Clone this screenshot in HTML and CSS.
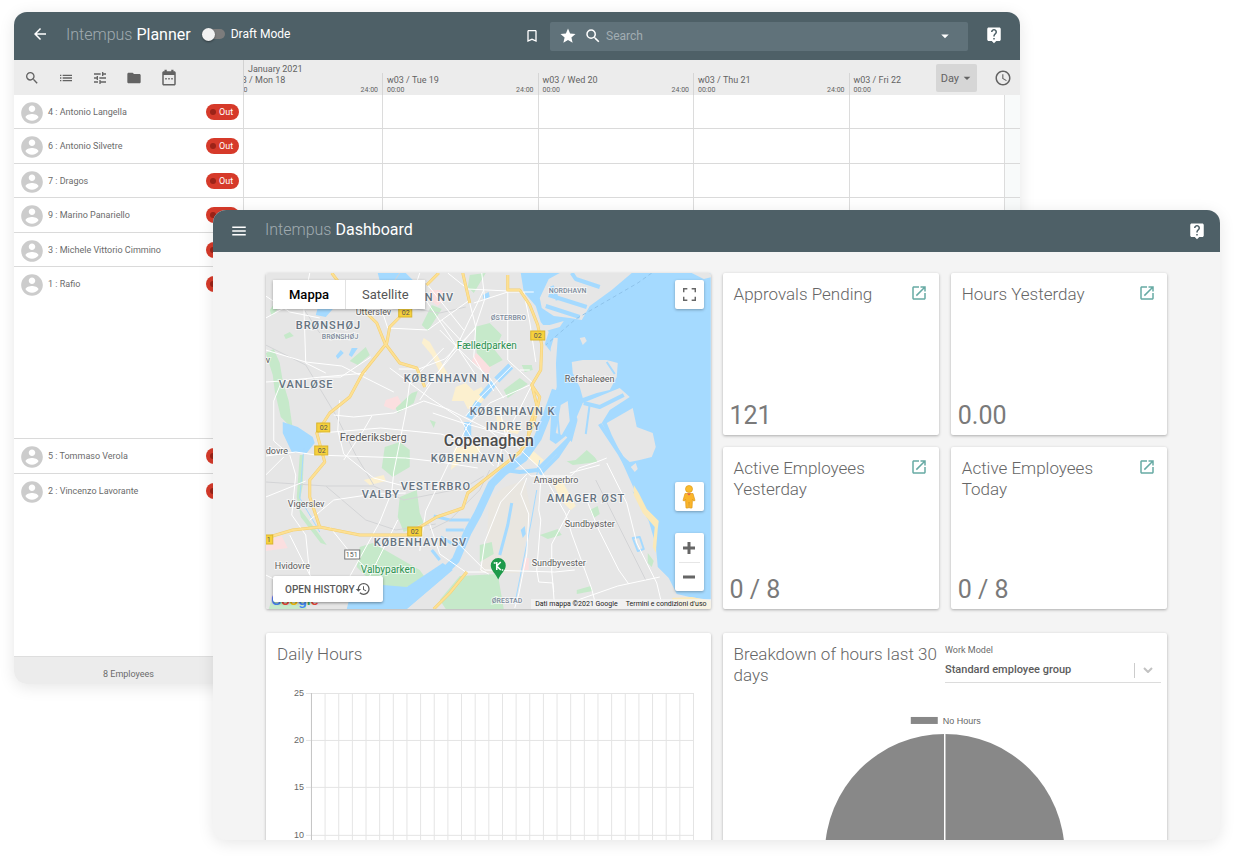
FILE: index.html
```html
<!DOCTYPE html>
<html lang="en">
<head>
<meta charset="utf-8">
<title>Intempus</title>
<link rel="stylesheet" href="styles.css">
</head>
<body>
<svg class="sprite" aria-hidden="true">
  <symbol id="i-back" viewBox="0 0 24 24"><path d="M20 11H7.83l5.59-5.59L12 4l-8 8 8 8 1.41-1.41L7.83 13H20v-2z"/></symbol>
  <symbol id="i-search" viewBox="0 0 24 24"><path d="M15.5 14h-.79l-.28-.27A6.471 6.471 0 0 0 16 9.5 6.5 6.5 0 1 0 9.5 16c1.61 0 3.09-.59 4.23-1.57l.27.28v.79l5 4.99L20.49 19l-4.99-5zm-6 0C7.01 14 5 11.99 5 9.5S7.01 5 9.5 5 14 7.01 14 9.5 11.99 14 9.5 14z"/></symbol>
  <symbol id="i-list" viewBox="0 0 24 24"><path d="M3 13h2v-2H3v2zm0 4h2v-2H3v2zm0-8h2V7H3v2zm4 4h14v-2H7v2zm0 4h14v-2H7v2zM7 7v2h14V7H7z"/></symbol>
  <symbol id="i-tune" viewBox="0 0 24 24"><path d="M3 17v2h6v-2H3zM3 5v2h10V5H3zm10 16v-2h8v-2h-8v-2h-2v6h2zM7 9v2H3v2h4v2h2V9H7zm14 4v-2H11v2h10zm-6-4h2V7h4V5h-4V3h-2v6z"/></symbol>
  <symbol id="i-folder" viewBox="0 0 24 24"><path d="M10 4H4c-1.1 0-1.99.9-1.99 2L2 18c0 1.1.9 2 2 2h16c1.1 0 2-.9 2-2V8c0-1.1-.9-2-2-2h-8l-2-2z"/></symbol>
  <symbol id="i-date" viewBox="0 0 24 24"><path d="M19 3h-1V1h-3v2H9V1H6v2H5c-1.110 0-2 .9-2 2v15c0 1.100.89 2 2 2h14c1.100 0 2-.9 2-2V5c0-1.100-.9-2-2-2zm0 17H5V8h14v12zM7 12h2v2H7zm4 0h2v2h-2zm4 0h2v2h-2z"/></symbol>
  <symbol id="i-user" viewBox="0 0 24 24"><path d="M12 2C6.48 2 2 6.48 2 12s4.48 10 10 10 10-4.48 10-10S17.52 2 12 2zm0 3c1.66 0 3 1.34 3 3s-1.34 3-3 3-3-1.34-3-3 1.34-3 3-3zm0 14.2c-2.5 0-4.71-1.28-6-3.22.03-1.99 4-3.08 6-3.08 1.99 0 5.97 1.09 6 3.08-1.29 1.94-3.5 3.22-6 3.22z"/></symbol>
  <symbol id="i-bookmark" viewBox="0 0 24 24"><path d="M17 3H7c-1.1 0-1.99.9-1.99 2L5 21l7-3 7 3V5c0-1.1-.9-2-2-2zm0 15l-5-2.18L7 18V5h10v13z"/></symbol>
  <symbol id="i-star" viewBox="0 0 24 24"><path d="M12 17.27L18.18 21l-1.64-7.03L22 9.24l-7.19-.61L12 2 9.19 8.63 2 9.24l5.46 4.73L5.82 21z"/></symbol>
  <symbol id="i-help" viewBox="0 0 24 24"><path d="M19 2H5c-1.11 0-2 .9-2 2v14c0 1.1.89 2 2 2h4l3 3 3-3h4c1.1 0 2-.9 2-2V4c0-1.1-.9-2-2-2zm-6 16h-2v-2h2v2zm2.07-7.75l-.9.92C13.45 11.9 13 12.5 13 14h-2v-.5c0-1.1.45-2.1 1.17-2.83l1.24-1.26c.37-.36.59-.86.59-1.41 0-1.1-.9-2-2-2s-2 .9-2 2H8c0-2.21 1.79-4 4-4s4 1.79 4 4c0 .88-.36 1.68-.93 2.25z"/></symbol>
  <symbol id="i-clock" viewBox="0 0 24 24"><path d="M11.99 2C6.47 2 2 6.48 2 12s4.47 10 9.99 10C17.52 22 22 17.52 22 12S17.52 2 11.99 2zM12 20c-4.42 0-8-3.58-8-8s3.58-8 8-8 8 3.58 8 8-3.58 8-8 8zm.5-13H11v6l5.25 3.15.75-1.23-4.5-2.67z"/></symbol>
  <symbol id="i-open" viewBox="0 0 24 24"><path d="M19 19H5V5h7V3H5c-1.11 0-2 .9-2 2v14c0 1.1.89 2 2 2h14c1.1 0 2-.9 2-2v-7h-2v7zM14 3v2h3.59l-9.83 9.83 1.41 1.41L19 6.41V10h2V3h-7z"/></symbol>
  <symbol id="i-history" viewBox="0 0 24 24"><path d="M13 3a9 9 0 0 0-9 9H1l3.89 3.89.07.14L9 12H6c0-3.87 3.13-7 7-7s7 3.13 7 7-3.13 7-7 7c-1.93 0-3.68-.79-4.94-2.06l-1.42 1.42A8.954 8.954 0 0 0 13 21a9 9 0 0 0 0-18zm-1 5v5l4.28 2.54.72-1.21-3.5-2.08V8H12z"/></symbol>
  <symbol id="i-menu" viewBox="0 0 24 24"><path d="M3 18h18v-2H3v2zm0-5h18v-2H3v2zm0-7v2h18V6H3z"/></symbol>
  <symbol id="i-drop" viewBox="0 0 24 24"><path d="M7 10l5 5 5-5z"/></symbol>
  <symbol id="i-full" viewBox="0 0 18 18"><path d="M0 0h6v2H2v4H0zM12 0h6v6h-2V2h-4zM0 12h2v4h4v2H0zM16 12h2v6h-6v-2h4z"/></symbol>
</svg>

<div class="stage">
  <section class="window planner" aria-label="Intempus Planner">
    <header class="bar planner-bar">
      <button class="icon-btn back" aria-label="Back"><svg class="icon icon-18"><use href="#i-back"/></svg></button>
      <h1 class="planner-title"><span class="brand">Intempus</span> Planner</h1>
      <label class="draft"><input class="switch" type="checkbox" role="switch">Draft Mode</label>
      <button class="icon-btn bookmark" aria-label="Bookmark"><svg class="icon icon-16"><use href="#i-bookmark"/></svg></button>
      <div class="search">
        <svg class="icon icon-18"><use href="#i-star"/></svg>
        <svg class="icon icon-18"><use href="#i-search"/></svg>
        <input class="search-input" type="text" placeholder="Search" aria-label="Search">
        <button class="icon-btn" aria-label="Search options"><svg class="icon icon-18"><use href="#i-drop"/></svg></button>
      </div>
      <button class="icon-btn help" aria-label="Help"><svg class="icon icon-18"><use href="#i-help"/></svg></button>
    </header>

    <div class="toolbar">
      <div class="tools">
        <button class="icon-btn" aria-label="Search"><svg class="icon icon-16"><use href="#i-search"/></svg></button>
        <button class="icon-btn" aria-label="List"><svg class="icon icon-16"><use href="#i-list"/></svg></button>
        <button class="icon-btn" aria-label="Filters"><svg class="icon icon-16"><use href="#i-tune"/></svg></button>
        <button class="icon-btn" aria-label="Folders"><svg class="icon icon-16"><use href="#i-folder"/></svg></button>
        <button class="icon-btn" aria-label="Calendar"><svg class="icon icon-18"><use href="#i-date"/></svg></button>
      </div>
      <div class="timeline">
        <div class="month">January 2021</div>
        <div class="days">
          <div class="day day-first"><span class="day-name">w03 / Mon 18</span><span class="hours"><span>00:00</span><span>24:00</span></span></div>
          <div class="day"><span class="day-name">w03 / Tue 19</span><span class="hours"><span>00:00</span><span>24:00</span></span></div>
          <div class="day"><span class="day-name">w03 / Wed 20</span><span class="hours"><span>00:00</span><span>24:00</span></span></div>
          <div class="day"><span class="day-name">w03 / Thu 21</span><span class="hours"><span>00:00</span><span>24:00</span></span></div>
          <div class="day"><span class="day-name">w03 / Fri 22</span><span class="hours"><span>00:00</span></span></div>
        </div>
        <div class="scale">
          <button class="scale-btn">Day <svg class="icon icon-16"><use href="#i-drop"/></svg></button>
          <button class="icon-btn" aria-label="Now"><svg class="icon icon-18"><use href="#i-clock"/></svg></button>
        </div>
      </div>
    </div>

    <div class="plan">
      <div class="columns" aria-hidden="true"><i></i><i></i><i></i><i></i><i></i><i></i><i class="next"></i></div>
      <ul class="employees">
        <li><svg class="avatar"><use href="#i-user"/></svg><span class="name">4 : Antonio Langella</span><span class="chip">Out</span></li>
        <li><svg class="avatar"><use href="#i-user"/></svg><span class="name">6 : Antonio Silvetre</span><span class="chip">Out</span></li>
        <li><svg class="avatar"><use href="#i-user"/></svg><span class="name">7 : Dragos</span><span class="chip">Out</span></li>
        <li><svg class="avatar"><use href="#i-user"/></svg><span class="name">9 : Marino Panariello</span><span class="chip">Out</span></li>
        <li><svg class="avatar"><use href="#i-user"/></svg><span class="name">3 : Michele Vittorio Cimmino</span><span class="chip">Out</span></li>
        <li><svg class="avatar"><use href="#i-user"/></svg><span class="name">1 : Rafio</span><span class="chip">Out</span></li>
        <li><svg class="avatar"><use href="#i-user"/></svg><span class="name">5 : Tommaso Verola</span><span class="chip">Out</span></li>
        <li><svg class="avatar"><use href="#i-user"/></svg><span class="name">2 : Vincenzo Lavorante</span><span class="chip">Out</span></li>
      </ul>
    </div>
    <footer class="count"><span>8 Employees</span></footer>
  </section>

  <section class="window dashboard" aria-label="Intempus Dashboard">
    <header class="bar dash-bar">
      <button class="icon-btn" aria-label="Menu"><svg class="icon icon-18"><use href="#i-menu"/></svg></button>
      <h1 class="dash-title"><span class="brand">Intempus</span> Dashboard</h1>
      <button class="icon-btn dash-help" aria-label="Help"><svg class="icon icon-18"><use href="#i-help"/></svg></button>
    </header>

    <main class="board">
      <div class="card map">
        <svg class="map-art" viewBox="266 273 445 336" preserveAspectRatio="xMidYMid slice" role="img" aria-label="Map of Copenhagen">
          <rect class="land" x="266" y="273" width="445" height="336"/>
          <!-- districts and built-up tints -->
          <path fill="#e9e6e0" d="M489 500l14-12 22-8 6 30-6 34-6 29h-40l8-30z"/>
          <path fill="#fcf0cf" d="M456 387l10-4 8 8 8-4 4 10-8 10-10 2-4-8-12 0zM455 448l16-2 12-4-4 10-18 10-10 8zM364 480l20-5 2 6-16 4zM496 412l14 16 12-2-4 8-20-4zM552 480l10 0 14 26-5 4-10-10zM530 448l14 12-6 6-12-10zM424 338l6 4 8 14 10 18-6 3-10-22-10-12z"/>
          <path fill="#fbdfe0" d="M430 290h12l4 8-8 8-8-6zM476 353l16 12-4 10-16-14zM386 400l12-4 4 8-8 6-10-4zM266 540l16-4 6 12-22 3zM524 558h5v12h-6z"/>
          <!-- parks -->
          <g class="park">
            <path d="M475 327l15-4 12 12-7 15 8 10-13 7-13-14z"/>
            <path d="M504 390l16-12 8 6-20 14z"/>
            <path d="M385 447l15-5 10 8v17l-17 10-11-9z"/>
            <path d="M400 497l17-7 3 23 4 10-20 9-6-15z"/>
            <path d="M360 547l13-4 47 27 7 10-20 7h-30l-20-20z"/>
            <path d="M440 600l20-24 38-2 6 35h-58z"/>
            <path d="M565 460l22-17 11 19-25 3z"/>
            <path d="M266 353l8-4 6 14 3 18 6 20 4 28-12-12-6-26-2-16z"/>
            <path d="M275 590l20-10 12 29h-38z"/>
            <path d="M432 305l10 4-14 22-6-6zM350 361l16-14 4 8-12 10zM284 335l6-3 4 4-8 3zM270 310l10-14 4 6-12 14zM412 393l6-2-4 12-16 10-2-5z"/>
            <path d="M540 535l18-6 4 6-14 4zM590 510l8-4 2 8-6 4zM577 590l14-4 2 5-16 3zM480 545l12-3 2 12-14 8zM430 420l6 2-2 6zM470 275l16-2-12 20-6-6zM522 365l10 0 1 5-8 2zM648 553l6 8-2 6-4-4z"/>
            <path d="M300 455l4 0-1 30-4 22 18 24 10 14-6-2-20-26-4-20z"/>
          </g>
          <!-- sea, harbour and lakes -->
          <g class="water">
            <path d="M521 273H711V609L711 600 690 597 677 594 669 578 658 567 656 545 649 521 636 498 628 480 621 463 608 445 597 430 586 440 576 446 566 436 556 444 550 440 552 405 557 387 556 358 545 344 549 332 541 322 536 306 524 292Z"/>
            <path d="M378 273h28l8 8h-34zM318 308l16 0-8 9-10-2zM283 422l15 5 15 10 2 6-8 10-15-1-9-19zM350 597l33-12 24 2 36-24 10 7-20 17-26 22h-60z"/>
            <path d="M336 356l5-6 3 3-6 6zM483 295l6-3 1 5-6 3zM521 530l4-4 1 8-3 4zM352 348l6 0-6 9-3-2z"/>
          </g>
          <g class="river">
            <path stroke-width="8" d="M556 390l-10 28-8 20-14 20-20 14-12 12-14 30-10 18-12 28-12 12-42 36"/>
            <path stroke-width="7" d="M511 366l-14 14M494 383l-12 14M479 402l-10 16M468 422l0 16"/>
            <path stroke-width="4" d="M504 470l16 2 18-2 18-18 14-14 8-16M580 412l-6 20-16 24-18 18"/>
            <path stroke-width="3" d="M470 520l-20 0-16-4M464 530l-18 0M455 545l-14-8M440 560l-8-10M500 555l8-30 4-22"/>
            <path stroke-width="1" d="M537 490l-6 34-8 40-8 40M304 448l-4 50 20 34M536 480l4-20"/>
            <path fill="none" stroke-width="2" d="M633 538l7-1 4 12-6 2z"/>
          </g>
          <!-- islands and quays -->
          <g class="land">
            <path d="M549 279l11-6h72l-20 17-22 16-8 14-12-2-16-2-12-8-2-10z"/>
            <path d="M536 325l14 0 14-4-4 6-14 4zM554 338l4 0-2 28-6-2 1-16zM536 376l8-6 7 3 2 10-8 8-8-3z"/>
            <path d="M572 362l11-2 24 0 11 3-1 14-7 13-13 3-14 5-3-11-7-14z"/>
            <path d="M620 388l10 9-20 13-8 13 15 27 20 45-50-45-10-33 6-14z"/>
            <path d="M607 423l26-15 4 19 16 6 3 14-4 10-12 3-10 2-8-7-10-20z"/>
            <path d="M561 405l7-4 2 20-8 14-6-2zM580 412l6 22 10 8-20 18-14 2 10-20zM631 467l5-4 2 6-3 3zM692 273h20v4l-8 2zM580 338l5-1 2 4-4 4z"/>
          </g>
          <g class="river">
            <path stroke-width="4" d="M549 295l38 12M546 306l34 11M552 286l6 14M572 273l4 6 24 8M584 403l16 4 24-12M600 424l20 30 8 14"/>
            <path stroke-width="2" d="M590 404l-4 30M607 362l8 12M556 400l4 38"/>
            <path stroke="#8fc3ea" stroke-dasharray="4 3" stroke-width="1" d="M652 273l-14 10-62 36-30 26"/>
          </g>
          <path fill="#fbe9b8" d="M634 485l5 8 8 16 12 12-1 8-2 24-3-6 2-20-12-14-9-18zM672 598l20-1 19 4v8h-30z"/>
          <!-- railways -->
          <path class="rail" d="M266 482l60 4 48 0 30 14 60-12 20-12M326 486l40 34 30 10 40-6M430 530l20-10 30-30 10-20M266 345l40 20 30 50 20 40 18 30M400 273l-20 30 60 10 26-6M596 480l20 40 30 60M300 303l20 30"/>
          <!-- local roads -->
          <g class="road">
            <path d="M266 296l24 16 30 6M266 318l44-24 26-10M266 350l40 12 36 4 32 16 20 10M310 273l-6 30 2 60 20 10M340 284l40 20 8 24 40 2 42-30M266 382l16-1 40-4 44-4M282 381l-8 20 0 40 14 12M266 456l30-4 20 3 90 3 34 4 38 6M266 475l18-18M266 497l40-16"/>
            <path d="M290 455l6 20-4 40 14 20 4 40 20 20M310 520l24-20 40-6 32-1M330 527l20 25 20 20M348 580l32-58 12-30 2-20 12-60 4-30 34-34M334 415l20 2 40-4 30-12 24 8 40 20 10 8M340 400l-2 30 6 24 30 24 30 8M321 433l60-5 60 6 40 12M371 357l-30 20-20 0"/>
            <path d="M390 368l40 30 30 20 20 34 14 14M399 369l20 0 26-10 30-30 10-30-3-26M426 387l50-60M470 303l6 24-2 30 20 34M474 303l34-11 26 0M440 330l30 30 20 18 14 20M508 290l0 70 24 22M512 366l-30 30-16 20M530 385l-40 18-22 22-16 32-26 54-6 40"/>
            <path d="M420 400l40-60 24-50M433 413l30 10 60 16M532 385l-10 20-18 34-6 28M524 292l6 30 6 40M442 320l28 30M424 280l40 50M448 273l20 16 40 2M500 410l6 26 34 32 26 46 6 20 20 55 5 20"/>
            <path d="M505 450l20 20 6 6 40 0 8-8 18-6 10-4M607 463l20 40 10 40 20 40 6 25M527 474l-26 28-12 30-4 10-4 28 8 4M527 478l-6 16 8 20-2 40-8 40-4 14M541 480l-2 30 2 10-4 50 2 12 14 1 2 26M570 510l-18 34 0 28 2 20M455 540l30 30 70 2 20-2M578 600l40-14 42-9M587 500l12 30 20 40 10 14M430 524l10 30 26 18 20 0M398 520l-30 60"/>
            <path d="M266 575l20 10 20 0M310 575l-20-40M344 460l20-30 8-14M600 465l-30 8M420 273l-4 12 60 90M520 370l10 0"/>
          </g>
          <!-- main roads -->
          <g class="highway-edge">
            <path d="M332 273l18 24 27 26 8 20 15 20 17 5 8 19M400 317l-10 10-3 16-24 30-13 24-20 16-13 20 8 29-15 18v17l10 30M266 538l27-8 27-3 40 8h47l30-18 26-9 5-15 32-25 20-16 8-12 2-15 7-20-5-20 9-15 1-25-4-20-8-20-10-15h-12v-15M532 385l8 12-6 26-10 24M467 572l-17 21-16 16M463 273l7 30M427 285l12-12"/>
          </g>
          <g class="highway">
            <path d="M332 273l18 24 27 26 8 20 15 20 17 5 8 19M400 317l-10 10-3 16-24 30-13 24-20 16-13 20 8 29-15 18v17l10 30M266 538l27-8 27-3 40 8h47l30-18 26-9 5-15 32-25 20-16 8-12 2-15 7-20-5-20 9-15 1-25-4-20-8-20-10-15h-12v-15M532 385l8 12-6 26-10 24M467 572l-17 21-16 16M463 273l7 30M427 285l12-12"/>
          </g>
          <!-- road shields -->
          <g class="shields">
            <rect x="399" y="308" width="13" height="9"/><rect x="531" y="331" width="14" height="9"/><rect x="317" y="423" width="13" height="9"/><rect x="315" y="446" width="13" height="9"/><rect x="408" y="527" width="14" height="9"/><rect x="266" y="535" width="7" height="9"/>
            <rect class="plain" x="345" y="550" width="15" height="9"/>
          </g>
          <g class="shield-text">
            <text x="406" y="315">02</text><text x="538" y="338">02</text><text x="324" y="430">02</text><text x="322" y="453">02</text><text x="415" y="534">02</text><text x="269" y="542">1</text><text x="352" y="557">151</text>
          </g>
          <!-- place names -->
          <g class="district">
            <text x="425" y="301">N NV</text><text x="296" y="329">BRØNSHØJ</text><text x="279" y="388">VANLØSE</text><text x="404" y="382">KØBENHAVN N</text><text x="470" y="415">KØBENHAVN K</text><text x="486" y="430">INDRE BY</text><text x="431" y="462">KØBENHAVN V</text><text x="401" y="490">VESTERBRO</text><text x="362" y="498">VALBY</text><text x="547" y="502">AMAGER ØST</text><text x="374" y="546">KØBENHAVN SV</text>
          </g>
          <g class="district-small">
            <text x="322" y="339">BRØNSHØJ</text><text x="549" y="293">NORDHAVN</text><text x="491" y="320">ØSTERBRO</text><text x="492" y="603">ØRESTAD</text>
          </g>
          <g class="place">
            <text x="356" y="315">Utterslev</text><text x="266" y="363">v</text><text x="565" y="382">Refshaleøen</text><text x="266" y="454">dovre</text><text x="288" y="507">Vigerslev</text><text x="275" y="569">Hvidovre</text><text x="534" y="483">Amagerbro</text><text x="565" y="527">Sundbyøster</text><text x="532" y="566">Sundbyvester</text>
            <text class="place-mid" x="340" y="441">Frederiksberg</text><text class="city" x="444" y="446">Copenaghen</text>
          </g>
          <g class="place park-name"><text x="457" y="349">Fælledparken</text><text x="361" y="573">Valbyparken</text></g>
          <!-- marker -->
          <path fill="#1e9a4b" d="M498.500 558a7.500 7.500 0 0 1 7.500 7.500c0 5-5 8-7.500 14-2.500-6-7.500-9-7.500-14a7.500 7.500 0 0 1 7.500-7.500z"/>
          <path fill="none" stroke="#fff" stroke-width="1.500" d="M497 562v8M501 562l-4 4 4 4M494 563h2M502 570h1.500"/>
        </svg>
        <div class="map-types">
          <button class="map-type active">Mappa</button>
          <button class="map-type">Satellite</button>
        </div>
        <button class="map-btn map-full" aria-label="Fullscreen"><svg class="full-icon"><use href="#i-full"/></svg></button>
        <div class="map-side">
          <button class="map-btn" aria-label="Street View">
            <svg class="pegman" viewBox="0 0 14 24"><circle cx="7" cy="4" r="3.500" fill="#fbbc2c" stroke="#e09b1a" stroke-width=".7"/><path d="M3 8.500h8l2 7-1.500.5-1-2-.5 9H7.500l-.5-6-.5 6H4l-.5-9-1 2L1 15.500z" fill="#fbb52a" stroke="#e09b1a" stroke-width=".7"/><path d="M5 8.500l2 2 2-2z" fill="#e2574c"/></svg>
          </button>
          <div class="zoom">
            <button class="zoom-btn" aria-label="Zoom in"><svg class="zoom-icon" viewBox="0 0 14 14"><path d="M5.500 1h3v4.500H13v3H8.500V13h-3V8.500H1v-3h4.500z"/></svg></button>
            <button class="zoom-btn" aria-label="Zoom out"><svg class="zoom-icon" viewBox="0 0 14 14"><path d="M1 5.500h12v3H1z"/></svg></button>
          </div>
        </div>
        <div class="google" aria-label="Google"><span class="g-blue">G</span><span class="g-red">o</span><span class="g-yellow">o</span><span class="g-blue">g</span><span class="g-green">l</span><span class="g-red">e</span></div>
        <button class="history">OPEN HISTORY<svg class="icon icon-16"><use href="#i-history"/></svg></button>
        <div class="credits"><span>Dati mappa ©2021 Google</span><a href="#terms">Termini e condizioni d'uso</a></div>
      </div>

      <article class="card stat">
        <div class="stat-head"><h2>Approvals Pending</h2><a class="open" href="#approvals" aria-label="Open approvals"><svg class="icon icon-18"><use href="#i-open"/></svg></a></div>
        <p class="value">121</p>
      </article>
      <article class="card stat">
        <div class="stat-head"><h2>Hours Yesterday</h2><a class="open" href="#hours" aria-label="Open hours"><svg class="icon icon-18"><use href="#i-open"/></svg></a></div>
        <p class="value">0.00</p>
      </article>
      <article class="card stat">
        <div class="stat-head"><h2>Active Employees Yesterday</h2><a class="open" href="#yesterday" aria-label="Open employees yesterday"><svg class="icon icon-18"><use href="#i-open"/></svg></a></div>
        <p class="value">0 / 8</p>
      </article>
      <article class="card stat">
        <div class="stat-head"><h2>Active Employees Today</h2><a class="open" href="#today" aria-label="Open employees today"><svg class="icon icon-18"><use href="#i-open"/></svg></a></div>
        <p class="value">0 / 8</p>
      </article>

      <article class="card chart">
        <div class="chart-head"><h2>Daily Hours</h2></div>
        <svg class="chart-art" viewBox="0 0 445 260" role="img" aria-label="Daily hours chart">
          <defs><pattern id="days" x="45" y="0" width="13.660" height="300" patternUnits="userSpaceOnUse"><path d="M.5 0V300" stroke="#e4e4e4"/></pattern></defs>
          <rect x="45" y="4" width="384" height="236" fill="url(#days)"/>
          <path stroke="#e4e4e4" d="M40 4.500H428M40 51.500H428M40 98.500H428M40 146.500H428M40 193.500H428"/>
          <path stroke="#c4c4c4" d="M45.500 4V240"/>
          <g class="tick" text-anchor="end"><text x="38" y="7">25</text><text x="38" y="54">20</text><text x="38" y="101">15</text><text x="38" y="149">10</text></g>
        </svg>
      </article>

      <article class="card chart">
        <div class="chart-head">
          <h2>Breakdown of hours last 30 days</h2>
          <div class="model">
            <label for="model">Work Model</label>
            <div class="select-wrap">
              <select id="model"><option>Standard employee group</option></select>
              <svg class="chevron" viewBox="0 0 10 6"><path d="M1 1l4 4 4-4"/></svg>
            </div>
          </div>
        </div>
        <svg class="chart-art" viewBox="0 0 445 260" role="img" aria-label="Breakdown of hours">
          <rect x="188" y="28" width="27" height="7" fill="#888"/>
          <text class="legend" x="220" y="35">No Hours</text>
          <circle cx="222" cy="165" r="120" fill="#888"/>
          <path d="M222 45V165" stroke="#fff" stroke-width="1.500"/>
        </svg>
      </article>
    </main>
  </section>
</div>
</body>
</html>
```
FILE: styles.css
```css
* { box-sizing: border-box; }

body {
  margin: 0;
  background: #fff;
  font-family: Roboto, "Liberation Sans", sans-serif;
  color: #6b6b6b;
}

h1, h2, p, ul { margin: 0; padding: 0; font-weight: 400; }
ul { list-style: none; }
button, input, select { font: inherit; color: inherit; border: 0; background: none; padding: 0; margin: 0; }
button { cursor: pointer; }

.sprite { display: none; }
.icon { display: block; fill: currentColor; flex: none; }
.icon-16 { width: 16px; height: 16px; }
.icon-18 { width: 18px; height: 18px; }
.icon-btn { display: flex; align-items: center; justify-content: center; flex: none; }

/* Two overlapping windows share one grid cell */
.stage {
  display: grid;
  grid-template: minmax(0, 1fr) / minmax(0, 1fr);
  height: 100vh;
  min-height: 640px;
  overflow: hidden;
}
.window {
  grid-area: 1 / 1;
  isolation: isolate;
  display: flex;
  flex-direction: column;
  overflow: hidden;
  border-radius: 13px;
  box-shadow: 0 3px 16px rgba(0, 0, 0, .1);
}
.planner { z-index: 1; margin: 12px 214px 172px 14px; background: #fff; }
.dashboard { z-index: 2; margin: 210px 14px 16px 213px; background: #f4f4f4; }

.bar { display: flex; align-items: center; flex: none; background: #4e6067; color: #fff; }
.brand { color: #a0abb0; font-weight: 300; }

/* Planner */
.planner-bar { height: 48px; padding: 0 17px; }
.planner-bar .back { margin-bottom: 4px; }
.planner-title { margin: 0 11px 4px 17px; font-size: 16px; white-space: nowrap; }
.draft { display: flex; align-items: center; gap: 6px; margin-bottom: 4px; font-size: 12px; white-space: nowrap; }
.switch {
  appearance: none;
  width: 23px;
  height: 10px;
  border-radius: 5px;
  background: #7c7c7c;
  display: flex;
  align-items: center;
}
.switch::before { content: ""; width: 13px; height: 13px; flex: none; border-radius: 50%; background: #f1f1f1; box-shadow: 0 1px 2px rgba(0, 0, 0, .4); }
.bookmark { margin: 0 10px 0 auto; }
.search {
  display: flex;
  align-items: center;
  flex: 0 1 418px;
  height: 29px;
  gap: 7px;
  padding: 0 14px 0 9px;
  border-radius: 2px;
  background: #60727a;
}
.search-input { flex: 1; min-width: 0; margin-left: -3px; font-size: 12px; outline: 0; }
.search-input::placeholder { color: #a2adb2; opacity: 1; }
.help { margin-left: 17px; margin-bottom: 2px; }

.toolbar { display: flex; flex: none; height: 35px; background: #ececec; color: #636363; }
.tools { display: flex; align-items: center; gap: 18px; width: 230px; padding-left: 10px; border-right: 1px solid #d2d2d2; flex: none; }
.timeline { position: relative; flex: 1; min-width: 0; overflow: hidden; }
.month { padding: 4px 0 0 4px; font-size: 9px; line-height: 11px; height: 13px; }
.days, .columns { display: grid; grid-template-columns: 138px repeat(4, 1fr) 16px; }
.days { height: 22px; }
.day { display: flex; flex-direction: column; min-width: 0; padding: 2px 4px 0; border-left: 1px solid #d6d6d6; }
.day-first { align-items: flex-end; border-left: 0; }
.day-first .day-name, .day-first .hours { width: 148px; }
.day-name { font-size: 9px; line-height: 11px; white-space: nowrap; }
.hours { display: flex; justify-content: space-between; font-size: 7px; line-height: 8px; }
.scale { position: absolute; right: 8px; top: 4px; display: flex; align-items: center; gap: 17px; }
.scale-btn { display: flex; align-items: center; height: 28px; padding: 0 2px 0 5px; border-radius: 2px; background: #d6d6d6; font-size: 11px; }

.plan { position: relative; flex: 1; min-height: 0; }
.columns { position: absolute; inset: 0; grid-template-columns: 229px 139px repeat(4, 1fr) 16px; }
.columns i { border-left: 1px solid #dcdcdc; }
.columns i:first-child { border-left: 0; }
.columns .next { background: #f8fafa; }
.employees {
  position: relative;
  display: grid;
  grid-template-rows: repeat(5, 10fr) 50fr 10fr 53fr;
  height: 100%;
}
.employees li { display: flex; align-items: flex-start; border-bottom: 1px solid #dadada; min-height: 0; }
.employees li:last-child { border-bottom: 0; }
.avatar { width: 26px; height: 26px; margin: 5px 3px 0 5px; fill: #ccc; flex: none; }
.name { width: 158px; font-size: 9px; line-height: 34px; white-space: nowrap; }
.chip {
  display: flex;
  align-items: center;
  gap: 3px;
  height: 16px;
  margin-top: 9px;
  padding: 0 6px 0 4px;
  border-radius: 8px;
  background: #d63a2a;
  color: #fff;
  font-size: 9px;
}
.chip::before { content: ""; width: 6px; height: 6px; border-radius: 50%; background: #9c2318; }
.count { flex: none; height: 28px; padding-top: 11px; border-top: 1px solid #dedede; background: #ececec; font-size: 9px; line-height: 12px; }
.count span { display: block; width: 229px; text-align: center; }

/* Dashboard */
.dash-bar { height: 42px; padding: 0 14px 0 17px; }
.dash-title { margin-left: 17px; font-size: 16px; padding-bottom: 3px; }
.dash-help { margin-left: auto; }

.board {
  display: grid;
  grid-template-columns: repeat(4, minmax(0, 1fr));
  grid-template-rows: 162px 162px auto;
  gap: 12px;
  padding: 21px 53px 0;
}
.card { border-radius: 2px; background: #fff; box-shadow: 0 1px 3px rgba(0, 0, 0, .3); }
.card h2 { font-size: 17px; line-height: 21px; font-weight: 300; color: #666; }

.stat { display: flex; flex-direction: column; justify-content: space-between; padding: 11px; }
.stat-head { display: flex; justify-content: space-between; align-items: flex-start; gap: 12px; }
.open { color: #67aaa4; }
.value { margin: 0 0 -6px -4px; font-size: 25px; line-height: 29px; color: #7a7a7a; }

.chart { grid-column: span 2; margin-top: 12px; }
.chart-head { display: flex; justify-content: space-between; height: 56px; padding: 11px 6px 0 11px; }
.chart-art { display: block; width: 100%; }
.tick, .legend { font-family: "Liberation Sans", Arial, sans-serif; font-size: 9px; fill: #666; }
.model { flex: none; width: 216px; font-size: 9px; line-height: 12px; }
.model label { display: block; }
.select-wrap { display: flex; align-items: center; height: 27px; padding-top: 2px; border-bottom: 1px solid #dcdcdc; }
.select-wrap select { appearance: none; flex: 1; height: 15px; border-right: 1px solid #ccc; font-size: 11px; font-weight: 500; color: #5c5c5c; outline: 0; }
.chevron { width: 10px; height: 6px; margin: 0 8px; fill: none; stroke: #c2c2c2; stroke-width: 2; }

/* Map */
.map { position: relative; grid-column: span 2; grid-row: span 2; overflow: hidden; }
.map-art { display: block; width: 100%; height: 100%; }
.land { fill: #e6e6e6; }
.park { fill: #c6e9ca; }
.water { fill: #a5daff; }
.river { fill: none; stroke: #a5daff; stroke-linejoin: round; }
.rail { fill: none; stroke: #d3d4d6; stroke-width: 1; }
.road { fill: none; stroke: #fff; stroke-width: 1; stroke-linejoin: round; }
.highway-edge { fill: none; stroke: #f3cf72; stroke-width: 3; stroke-linejoin: round; }
.highway { fill: none; stroke: #fde093; stroke-width: 2; stroke-linejoin: round; }
.shields rect { fill: #f6d13c; stroke: #d9b42c; stroke-width: 1; }
.shields .plain { fill: #fff; stroke: #777; }
.shield-text { font-size: 7px; fill: #555; text-anchor: middle; }
.district, .district-small, .place { paint-order: stroke; stroke: rgba(255, 255, 255, .6); stroke-width: 2px; }
.district { font-size: 11px; font-weight: 500; letter-spacing: 1px; fill: #64727f; }
.district-small { font-size: 7px; font-weight: 500; fill: #7d8b9b; }
.place { font-size: 9px; fill: #5c5c5c; }
.place-mid { font-size: 11px; }
.city { font-size: 16px; font-weight: 500; fill: #4d4d4d; }
.park-name { font-size: 10px; fill: #2b9150; }

.map-types { position: absolute; left: 7px; top: 7px; display: flex; background: #fff; box-shadow: 0 1px 3px rgba(0, 0, 0, .3); }
.map-type { height: 29px; padding: 0 16px; font-size: 13px; color: #565656; }
.map-type + .map-type { border-left: 1px solid #e2e2e2; }
.map-type.active { font-weight: 500; color: #000; }
.map-btn { display: flex; align-items: center; justify-content: center; width: 29px; height: 29px; border-radius: 2px; background: #fff; box-shadow: 0 1px 3px rgba(0, 0, 0, .3); }
.map-full { position: absolute; right: 7px; top: 7px; }
.full-icon { width: 13px; height: 13px; fill: #666; }
.pegman { width: 14px; height: 24px; }
.map-side { position: absolute; right: 7px; bottom: 18px; display: grid; gap: 22px; }
.zoom { width: 29px; border-radius: 2px; background: #fff; box-shadow: 0 1px 3px rgba(0, 0, 0, .3); }
.zoom-btn { display: flex; align-items: center; justify-content: center; width: 21px; height: 29px; margin: 0 4px; }
.zoom-btn + .zoom-btn { border-top: 1px solid #e6e6e6; }
.zoom-icon { width: 14px; height: 14px; fill: #666; flex: none; }
.google { position: absolute; left: 5px; bottom: 0; font-size: 15px; font-weight: 500; line-height: 18px; }
.g-blue { color: #4285f4; }
.g-red { color: #ea4335; }
.g-yellow { color: #fbbc05; }
.g-green { color: #34a853; }
.history {
  position: absolute;
  left: 7px;
  bottom: 7px;
  display: flex;
  align-items: center;
  height: 26px;
  padding: 0 12px;
  border-radius: 2px;
  background: #fff;
  box-shadow: 0 1px 3px rgba(0, 0, 0, .4);
  color: #5a5a5a;
  font-size: 10px;
  font-weight: 500;
}
.credits { position: absolute; right: 0; bottom: 0; display: flex; gap: 8px; padding: 0 4px; background: rgba(245, 245, 245, .7); font-size: 7px; line-height: 10px; color: #222; }
.credits a { color: inherit; text-decoration: none; }
```
